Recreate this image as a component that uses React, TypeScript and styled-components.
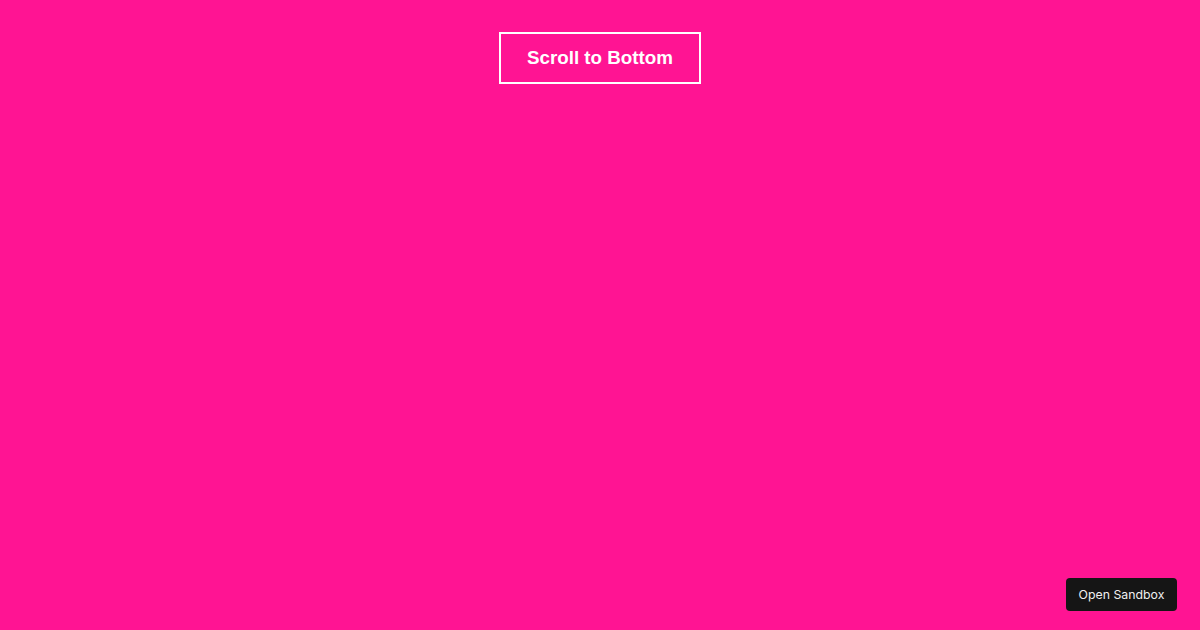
import React from "react";
import styled, { createGlobalStyle } from "styled-components";

const GlobalStyle = createGlobalStyle`
  html, body {
    margin: 0;
    padding: 0;
    background-color: #ff1493;
  }
`;

function App() {
  return (
    <>
      <GlobalStyle />
      <Page>
        <ScrollButton>Scroll to Bottom</ScrollButton>
      </Page>
      <SandboxLink>Open Sandbox</SandboxLink>
    </>
  );
}

const Page = styled.main`
  display: flex;
  justify-content: center;
  padding-top: 32px;
  height: 630px;
  box-sizing: border-box;
`;
const ScrollButton = styled.button`
  align-self: flex-start;
  background: transparent;
  border: 2px solid white;
  color: white;
  font-family: "Liberation Sans", Arial, sans-serif;
  font-weight: bold;
  font-size: 18.8px;
  line-height: 20px;
  padding: 14px 0;
  width: 202px;
  cursor: pointer;
`;
const SandboxLink = styled.a`
  position: fixed;
  right: 23px;
  bottom: 19px;
  width: 111px;
  height: 33px;
  box-sizing: border-box;
  padding-bottom: 1px;
  display: flex;
  align-items: center;
  justify-content: center;
  background-color: #151515;
  color: #f0f0f0;
  border-radius: 4px;
  font-family: Inter, "Liberation Sans", sans-serif;
  font-size: 12.3px;
  text-decoration: none;
`;

export default App;
